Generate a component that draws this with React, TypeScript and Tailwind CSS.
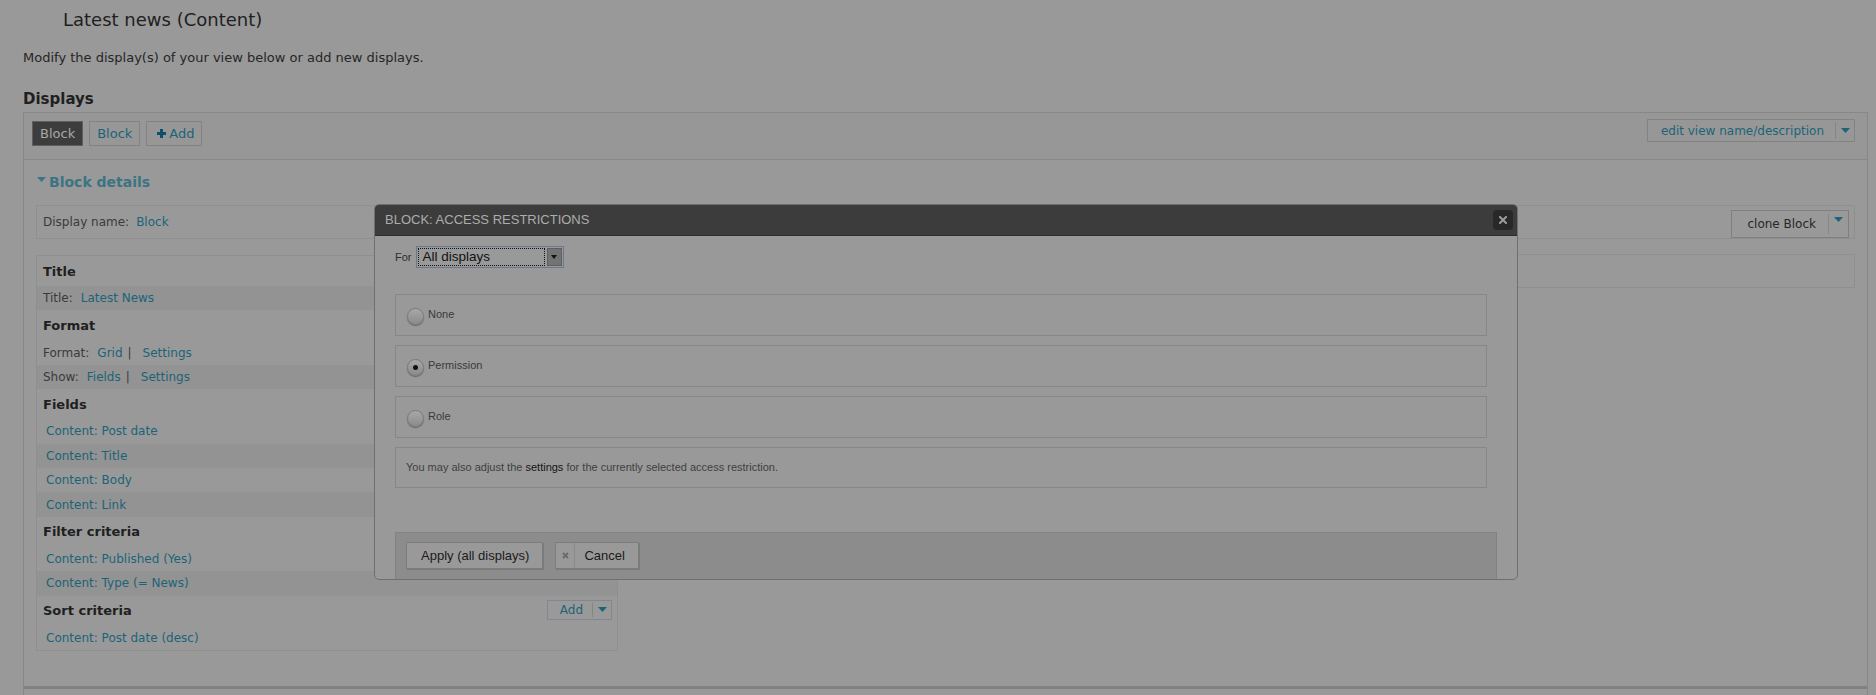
import React from "react";

const LINK = "text-[#1b6478]";

function Caret({ color = "#1b6478" }: { color?: string }) {
  return (
    <svg width="9" height="5" viewBox="0 0 9 5">
      <path d="M0 0 L9 0 L4.5 5 Z" fill={color} />
    </svg>
  );
}

type Row = { content: React.ReactNode; dark?: boolean; kind?: "label" | "item" };

function Header({ title, right }: { title: string; right?: React.ReactNode }) {
  return (
    <div className="h-[30px] flex items-center justify-between pl-[6px] pr-[5px] pt-[1px]">
      <span className="text-[13px] font-bold text-[#1f1f1f]">{title}</span>
      {right}
    </div>
  );
}

function RowEl({ r }: { r: Row }) {
  return (
    <div
      className={`h-[24.4px] flex items-center text-[12px] ${r.kind === "label" ? "pl-[6px]" : "pl-[9px]"} ${
        r.dark ? "bg-[#939393]" : ""
      }`}
    >
      {r.content}
    </div>
  );
}

const Label = ({ t }: { t: string }) => <span className="text-[#3a3a3a]">{t}</span>;
const Pipe = () => <span className="ml-[5px] text-[#3a3a3a]">|</span>;

export default function App() {
  const sections: { title: string; rows: Row[]; right?: React.ReactNode }[] = [
    {
      title: "Title",
      rows: [
        {
          kind: "label",
          dark: true,
          content: (
            <>
              <Label t="Title:" />
              <span className={`ml-[8px] ${LINK}`}>Latest News</span>
            </>
          ),
        },
      ],
    },
    {
      title: "Format",
      rows: [
        {
          kind: "label",
          content: (
            <>
              <Label t="Format:" />
              <span className={`ml-[8px] ${LINK}`}>Grid</span>
              <Pipe />
              <span className={`ml-[11px] ${LINK}`}>Settings</span>
            </>
          ),
        },
        {
          kind: "label",
          dark: true,
          content: (
            <>
              <Label t="Show:" />
              <span className={`ml-[8px] ${LINK}`}>Fields</span>
              <Pipe />
              <span className={`ml-[11px] ${LINK}`}>Settings</span>
            </>
          ),
        },
      ],
    },
    {
      title: "Fields",
      rows: [
        { content: <span className={LINK}>Content: Post date</span> },
        { dark: true, content: <span className={LINK}>Content: Title</span> },
        { content: <span className={LINK}>Content: Body</span> },
        { dark: true, content: <span className={LINK}>Content: Link</span> },
      ],
    },
    {
      title: "Filter criteria",
      rows: [
        { content: <span className={LINK}>Content: Published (Yes)</span> },
        { dark: true, content: <span className={LINK}>Content: Type (= News)</span> },
      ],
    },
    {
      title: "Sort criteria",
      right: (
        <div className="-mt-[3px] h-[20px] flex items-stretch border border-[#7f8890] text-[12px]">
          <span className={`pl-[12px] pr-[9px] flex items-center ${LINK}`}>Add</span>
          <span className="w-[19px] border-l border-[#858585] my-[2px] flex items-center justify-center">
            <Caret />
          </span>
        </div>
      ),
      rows: [{ content: <span className={LINK}>Content: Post date (desc)</span> }],
    },
  ];

  return (
    <div className="relative w-[1876px] h-[695px] overflow-hidden bg-[#999999] font-['DejaVu_Sans',sans-serif] text-[#222]">
      <div className="pl-[63px] pt-[9px] text-[18px] leading-[22px] text-[#1f1f1f]">Latest news (Content)</div>
      <div className="pl-[23px] mt-[19px] text-[13px] leading-[16px] text-[#262626]">
        Modify the display(s) of your view below or add new displays.
      </div>
      <div className="pl-[23px] mt-[24px] text-[15px] leading-[18px] font-bold text-[#1f1f1f]">Displays</div>

      <div className="ml-[23px] mr-[8px] mt-[4px] border-l border-r border-t border-[#878787]">
        {/* tab bar */}
        <div className="h-[47px] border-b border-[#878787] bg-[#979797] flex justify-between items-start pl-[8px] pr-[12px] pt-[6px]">
          <div className="flex mt-[2px] text-[13px]">
            <div className="h-[25px] px-[7px] flex items-center border border-[#5e5e5e] bg-[#3d3d3d] text-[#a8a8a8]">Block</div>
            <div className={`ml-[6px] h-[25px] px-[7px] flex items-center border border-[#838383] ${LINK}`}>Block</div>
            <div className={`ml-[6px] h-[25px] pl-[10px] pr-[6px] flex items-center border border-[#838383] ${LINK}`}>
              <svg width="9" height="9" viewBox="0 0 9 9" className="mr-[3px]">
                <path d="M3 0 H6 V3 H9 V6 H6 V9 H3 V6 H0 V3 H3 Z" fill="#0d4f6c" />
              </svg>
              Add
            </div>
          </div>
          <div className="h-[23px] flex items-stretch border border-[#838383] text-[12px]">
            <span className={`pl-[13px] pr-[11px] flex items-center ${LINK}`}>edit view name/description</span>
            <span className="w-[19px] border-l border-[#868686] my-[2px] flex items-center justify-center">
              <Caret />
            </span>
          </div>
        </div>

        {/* body */}
        <div className="h-[526px] pl-[12px] pr-[12px] pt-[14px]">
          <div className="flex items-start h-[17px] pl-[1px]">
            <span className="mt-[3px]">
              <Caret color="#3a7585" />
            </span>
            <span className="ml-[3px] text-[14px] leading-[17px] font-bold text-[#3b7483]">Block details</span>
          </div>

          <div className="mt-[14px] h-[34px] border border-[#8f8f8f] flex items-center justify-between pl-[6px] pr-[5px]">
            <div className="text-[12px]">
              <Label t="Display name:" />
              <span className={`ml-[7px] ${LINK}`}>Block</span>
            </div>
            <div className="self-end h-[28px] flex items-stretch border border-[#7f7f7f] text-[12px] text-[#262626]">
              <span className="pl-[15px] pr-[12px] flex items-center">clone Block</span>
              <span className="w-[20px] border-l border-[#868686] my-[3px] flex items-start pt-[3px] justify-center">
                <Caret />
              </span>
            </div>
          </div>

          <div className="mt-[16px] flex items-start">
            <div className="w-[582px] border border-[#8f8f8f]">
              {sections.map((s) => (
                <div key={s.title}>
                  <Header title={s.title} right={s.right} />
                  {s.rows.map((r, i) => (
                    <RowEl key={i} r={r} />
                  ))}
                </div>
              ))}
            </div>
            <div className="ml-auto w-[614px] h-[34px] -mt-[1px] border border-[#8f8f8f]" />
          </div>
        </div>
        <div className="border-t-[3px] border-[#818181] h-[20px]" />
      </div>

      {/* modal */}
      <div className="absolute left-[374px] top-[204px] w-[1144px] h-[376px] border border-[#6f6f6f] rounded-[5px] overflow-hidden bg-[#999999] flex flex-col font-['Liberation_Sans',Arial,sans-serif]">
        <div className="h-[31px] shrink-0 bg-[#3c3c3c] border-b border-[#2c2c2c] flex items-center justify-between pl-[10px] pr-[4px]">
          <span className="text-[13px] text-[#acacac]">BLOCK: ACCESS RESTRICTIONS</span>
          <div className="w-[20px] h-[20px] rounded-[4px] bg-[#282828] flex items-center justify-center">
            <svg width="8" height="8" viewBox="0 0 8 8">
              <path d="M1 1 L7 7 M7 1 L1 7" stroke="#9c9c9c" strokeWidth="2" strokeLinecap="square" />
            </svg>
          </div>
        </div>

        <div className="pl-[20px] flex flex-col flex-1">
          <div className="mt-[10px] flex items-center">
            <span className="text-[11px] text-[#2e2e2e]">For</span>
            <div className="ml-[4px] w-[148px] h-[22px] border border-[#6a7889] flex items-stretch p-[1px]">
              <div className="flex-1 border border-dotted border-[#111] flex items-center pl-[4px] text-[13.5px] text-[#111]">
                All displays
              </div>
              <div className="ml-[2px] w-[15px] bg-[#737373] border border-[#5f5f5f] flex items-center justify-center">
                <svg width="6" height="4" viewBox="0 0 6 4">
                  <path d="M0 0 H6 L3 4 Z" fill="#111" />
                </svg>
              </div>
            </div>
          </div>

          {[
            { label: "None", checked: false },
            { label: "Permission", checked: true },
            { label: "Role", checked: false },
          ].map((o, i) => (
            <div
              key={o.label}
              className={`${i === 0 ? "mt-[26px]" : "mt-[9px]"} w-[1092px] h-[42px] border border-[#878787] flex items-center pl-[11px]`}
            >
              <div className="mt-[3px] w-[17px] h-[17px] rounded-full border border-[#7a7a7a] bg-gradient-to-b from-[#a8a8a8] to-[#8b8b8b] shadow-[0_1px_1px_rgba(0,0,0,0.35)] flex items-center justify-center">
                {o.checked && <div className="w-[5px] h-[5px] rounded-full bg-[#111]" />}
              </div>
              <span className="ml-[4px] -mt-[1px] text-[11px] text-[#3a3a3a]">{o.label}</span>
            </div>
          ))}

          <div className="mt-[9px] w-[1092px] h-[41px] border border-[#878787] flex items-center pl-[10px] text-[11px] text-[#3f3f3f]">
            You may also adjust the&nbsp;<span className="text-[#151515]">settings</span>&nbsp;for the currently selected access restriction.
          </div>

          <div className="mt-auto w-[1102px] h-[47px] border-t border-l border-r border-[#828282] bg-[#8c8c8c] flex items-start pt-[9px] pl-[10px]">
            <div className="h-[27px] pl-[14px] pr-[13px] flex items-center border border-[#7c7c7c] bg-[#999999] shadow-[1px_1px_0_#7a7a7a] text-[13px] text-[#1a1a1a]">
              Apply (all displays)
            </div>
            <div className="ml-[12px] h-[27px] flex items-stretch border border-[#7c7c7c] bg-[#999999] shadow-[1px_1px_0_#7a7a7a] text-[13px] text-[#1a1a1a]">
              <span className="w-[19px] border-r border-[#8a8a8a] flex items-center justify-center">
                <svg width="7" height="7" viewBox="0 0 7 7">
                  <path d="M1 1 L6 6 M6 1 L1 6" stroke="#6a6a6a" strokeWidth="1.8" />
                </svg>
              </span>
              <span className="pl-[9px] pr-[13px] flex items-center">Cancel</span>
            </div>
          </div>
        </div>
      </div>
    </div>
  );
}
